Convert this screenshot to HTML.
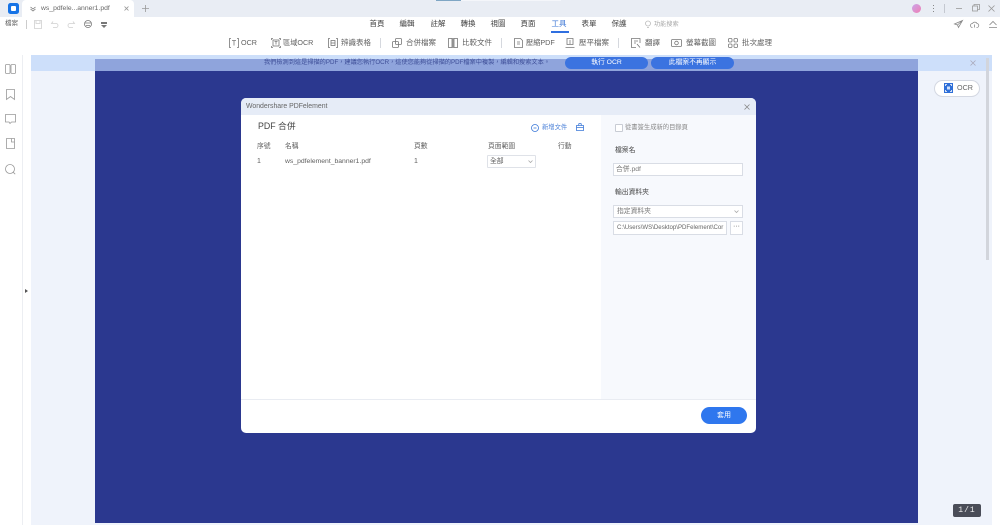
<!DOCTYPE html>
<html lang="zh-Hant"><head><meta charset="utf-8"><title>PDFelement</title>
<style>
html,body{margin:0;padding:0;width:1000px;height:525px;overflow:hidden;background:#fff}
body{font-family:"Liberation Sans","Noto Sans CJK TC",sans-serif;color:#444;position:relative}
.a{position:absolute;white-space:nowrap}
.t{font-size:7.5px;line-height:10px;color:#5f5f5f}
svg.i{position:absolute;fill:none;stroke:#777;stroke-width:.8;overflow:visible}
.c{transform:translateX(-50%)}
</style></head><body>
<!-- title bar -->
<div class="a" style="left:0;top:0;width:1000px;height:17px;background:#e9edf4"></div>
<div class="a" style="left:436px;top:0;width:25px;height:1px;background:#7fa6c4"></div>
<div class="a" style="left:461px;top:0;width:100px;height:1px;background:#f4f6fa"></div>
<div class="a" style="left:8px;top:3px;width:11px;height:11px;border-radius:2.5px;background:#1673e6"></div>
<div class="a" style="left:11px;top:5.5px;width:5px;height:5px;background:#fff;border-radius:1px"></div>
<div class="a" style="left:22px;top:0;width:112px;height:17px;background:#fff;border-radius:4px 4px 0 0"></div>
<svg class="i" style="left:30px;top:6px" width="6" height="6"><path d="M.5 1 3 3 5.500 1M.5 3 3 5 5.500 3"/></svg>
<div class="a" style="left:41px;top:3px;font-size:6.8px;line-height:11px;color:#666">ws_pdfele...anner1.pdf</div>
<svg class="i" style="left:124px;top:6px;stroke:#999" width="5" height="5"><path d="M.5.5l4 4M4.500.5l-4 4"/></svg>
<svg class="i" style="left:142px;top:5px;stroke:#999" width="7" height="7"><path d="M3.500 0v7M0 3.500h7"/></svg>
<div class="a" style="left:912px;top:4px;width:9px;height:9px;border-radius:50%;background:linear-gradient(135deg,#c9a4ea,#f07fb3)"></div>
<div class="a" style="left:933px;top:5px;width:1px;height:1px;background:#888;box-shadow:0 3px #888,0 6px #888"></div>
<div class="a" style="left:944px;top:4px;width:1px;height:9px;background:#c4c8d0"></div>
<svg class="i" style="left:956px;top:8px;stroke:#999" width="7" height="2"><path d="M0 .5h6"/></svg>
<svg class="i" style="left:972px;top:4px;stroke:#999" width="8" height="8"><rect x=".5" y="2" width="5" height="5"/><path d="M2 2V.5h5.500v5H5.500"/></svg>
<svg class="i" style="left:988px;top:5px;stroke:#999" width="7" height="7"><path d="M.5.5l6 6M6.500.5l-6 6"/></svg>
<!-- quick row -->
<div class="a t" style="left:5px;top:19px;font-size:6.5px">檔案</div>
<div class="a" style="left:26px;top:20px;width:1px;height:9px;background:#ccc"></div>
<svg class="i" style="left:34px;top:20px;stroke:#d0d0d0" width="8" height="9"><path d="M.5.500h7v8h-7zM2 .5v3h4v-3"/></svg>
<svg class="i" style="left:51px;top:21px;stroke:#d0d0d0" width="8" height="7"><path d="M2 .5.500 2.500H5a2 2 0 0 1 0 4H2"/></svg>
<svg class="i" style="left:67px;top:21px;stroke:#d0d0d0" width="8" height="7"><path d="M6 .5l1.500 2H3a2 2 0 0 0 0 4h3"/></svg>
<svg class="i" style="left:84px;top:20px;stroke:#777" width="8" height="8"><circle cx="4" cy="4" r="3.500"/><path d="M1 3h6M2 5.500h4"/></svg>
<div class="a" style="left:101px;top:22px;width:6px;height:2px;background:#777"></div>
<div class="a" style="left:101px;top:25px;border:3px solid transparent;border-top:3px solid #777;border-bottom:0"></div>
<!-- menu -->
<div class="a t c" style="left:377px;top:19px;color:#444">首頁</div>
<div class="a t c" style="left:407px;top:19px;color:#444">編輯</div>
<div class="a t c" style="left:438px;top:19px;color:#444">註解</div>
<div class="a t c" style="left:468px;top:19px;color:#444">轉換</div>
<div class="a t c" style="left:498px;top:19px;color:#444">視圖</div>
<div class="a t c" style="left:528px;top:19px;color:#444">頁面</div>
<div class="a t c" style="left:559px;top:19px;color:#3a74d4">工具</div>
<div class="a" style="left:551px;top:31px;width:18px;height:1.500px;background:#2f6fe0"></div>
<div class="a t c" style="left:589px;top:19px;color:#444">表單</div>
<div class="a t c" style="left:619px;top:19px;color:#444">保護</div>
<svg class="i" style="left:644px;top:20px;stroke:#bbb" width="8" height="9"><circle cx="4" cy="3.500" r="2.500"/><path d="M3 7.500h2"/></svg>
<div class="a" style="left:654px;top:20px;font-size:6.200px;line-height:9px;color:#aaa">功能搜索</div>
<svg class="i" style="left:954px;top:20px;stroke:#888" width="9" height="8"><path d="M8.500.5.500 4l3 1 1 2.500L8.500.5zM3.500 5 8.500.5"/></svg>
<svg class="i" style="left:970px;top:21px;stroke:#888" width="9" height="7"><path d="M2.500 6.500a2 2 0 0 1 0-4 2.500 2.500 0 0 1 4.500 0 2 2 0 0 1-.5 4M4.500 6.500V3.500"/></svg>
<svg class="i" style="left:989px;top:21px;stroke:#888" width="8" height="7"><path d="M.5 4 4 .5 7.500 4M0 6.500h8"/></svg>
<!-- toolbar -->
<svg class="i" style="left:229px;top:38px" width="10" height="10"><path d="M2 .5H.5v9H2M8 .5h1.500v9H8M3 2.500h4M5 2.500v5"/></svg>
<div class="a t" style="left:241px;top:38px;font-size:7.200px">OCR</div>
<svg class="i" style="left:271px;top:38px" width="10" height="10"><path d="M2 .5H.5V2M8 .5h1.500V2M2 9.500H.5V8M8 9.500h1.500V8"/><rect x="2" y="2" width="6" height="6"/><path d="M3.500 3.500h3M5 3.500v3"/></svg>
<div class="a t" style="left:283px;top:38px;font-size:7.200px">區域OCR</div>
<svg class="i" style="left:328px;top:38px" width="10" height="10"><path d="M2 .5H.5v9H2M8 .5h1.500v9H8"/><rect x="3" y="2.500" width="4" height="5"/><path d="M3 5h4"/></svg>
<div class="a t" style="left:341px;top:38px">辨識表格</div>
<div class="a" style="left:380px;top:38px;width:1px;height:10px;background:#d5d8de"></div>
<svg class="i" style="left:392px;top:38px" width="10" height="10"><rect x=".5" y="3.500" width="6" height="6" rx="1"/><rect x="3.500" y=".5" width="6" height="6" rx="1"/></svg>
<div class="a t" style="left:406px;top:38px">合併檔案</div>
<svg class="i" style="left:448px;top:38px" width="10" height="10"><rect x=".5" y=".5" width="3.500" height="9"/><rect x="6" y=".5" width="3.500" height="9"/><path d="M5 0v10"/></svg>
<div class="a t" style="left:462px;top:38px">比較文件</div>
<div class="a" style="left:501px;top:38px;width:1px;height:10px;background:#d5d8de"></div>
<svg class="i" style="left:514px;top:38px" width="10" height="10"><path d="M.5.5h6l2 2v7h-8zM3 4h3M3 6h3"/></svg>
<div class="a t" style="left:526px;top:38px;font-size:7.200px">壓縮PDF</div>
<svg class="i" style="left:565px;top:38px" width="10" height="10"><path d="M2 .5h6v6H2zM.5 9.500h9M4 3h2M4 5h2"/></svg>
<div class="a t" style="left:579px;top:38px">壓平檔案</div>
<div class="a" style="left:618px;top:38px;width:1px;height:10px;background:#d5d8de"></div>
<svg class="i" style="left:631px;top:38px" width="10" height="10"><path d="M9 5V.5H.5v9H5M3 3h4M3 5h2M6 6l3 3.500"/></svg>
<div class="a t" style="left:645px;top:38px">翻譯</div>
<svg class="i" style="left:671px;top:38px" width="11" height="10"><rect x=".5" y="1.500" width="10" height="7" rx="1"/><circle cx="5.500" cy="5" r="1.800"/></svg>
<div class="a t" style="left:686px;top:38px">螢幕截圖</div>
<svg class="i" style="left:728px;top:38px" width="10" height="10"><rect x=".5" y=".5" width="3.500" height="3.500" rx="1"/><rect x="6" y=".5" width="3.500" height="3.500" rx="1"/><rect x=".5" y="6" width="3.500" height="3.500" rx="1"/><rect x="6" y="6" width="3.500" height="3.500" rx="1"/></svg>
<div class="a t" style="left:742px;top:38px">批次處理</div>
<!-- content bg -->
<div class="a" style="left:31px;top:55px;width:961px;height:470px;background:#eff3fb"></div>
<div class="a" style="left:22px;top:55px;width:1px;height:470px;background:#eceef2"></div>
<!-- sidebar icons -->
<svg class="i" style="left:5px;top:64px;stroke:#999" width="11" height="10"><rect x=".5" y=".5" width="4.500" height="9" rx="1"/><rect x="6" y=".5" width="4.500" height="9" rx="1"/></svg>
<svg class="i" style="left:6px;top:89px;stroke:#999" width="9" height="11"><path d="M.5.5h8v10L4.500 7.500.5 10.500z"/></svg>
<svg class="i" style="left:5px;top:114px;stroke:#999" width="11" height="10"><path d="M.5.5h10v7.500H6.500L5 9.500 4 8H.5z"/></svg>
<svg class="i" style="left:6px;top:138px;stroke:#999" width="9" height="11"><path d="M.5.5h8v10h-8zM5.500.5v3.500h3"/></svg>
<svg class="i" style="left:5px;top:164px;stroke:#999" width="11" height="11"><circle cx="5" cy="5" r="4.500"/><path d="M8.200 8.200l2 2"/></svg>
<div class="a" style="left:25px;top:289px;border:2px solid transparent;border-left:3px solid #555"></div>
<!-- page -->
<div class="a" style="left:95px;top:59px;width:823px;height:464px;background:#2b388f"></div>
<!-- banner -->
<div class="a" style="left:31px;top:55px;width:961px;height:16px;background:#cddffa"></div>
<div class="a" style="left:95px;top:59px;width:823px;height:12px;background:#8fa4dc"></div>
<div class="a" style="left:264px;top:58px;font-size:6.200px;line-height:10px;color:#3f4f98">我們檢測到這是掃描的PDF，建議您執行OCR，這使您能夠從掃描的PDF檔案中複製，編輯和搜索文本。</div>
<div class="a" style="left:565px;top:57px;width:83px;height:12px;border-radius:6px;background:#3b73e0;color:#fff;font-size:6.800px;line-height:12px;text-align:center">執行 OCR</div>
<div class="a" style="left:651px;top:57px;width:83px;height:12px;border-radius:6px;background:#3b73e0;color:#fff;font-size:6.800px;line-height:12px;text-align:center">此檔案不再顯示</div>
<svg class="i" style="left:970px;top:60px;stroke:#aab" width="6" height="6"><path d="M.5.5l5 5M5.500.5l-5 5"/></svg>
<!-- scrollbar -->
<div class="a" style="left:986px;top:58px;width:3px;height:202px;background:#d2d5dc"></div>
<!-- OCR button -->
<div class="a" style="left:934px;top:80px;width:44px;height:15px;border:1px solid #d4d8e2;border-radius:9px;background:#fff"></div>
<svg class="a" style="left:944px;top:83px" width="9" height="10"><rect width="9" height="10" fill="#2f6fd8"/><path d="M1.500 3V1.500H3M6 1.500h1.500V3M1.500 7v1.500H3M6 8.500h1.500V7" fill="none" stroke="#fff" stroke-width=".8"/><rect x="3" y="3.500" width="3" height="3" fill="#cfe0fb"/></svg>
<div class="a" style="left:957px;top:83px;font-size:7.200px;line-height:10px;color:#666">OCR</div>
<!-- page num -->
<div class="a" style="left:953px;top:504px;width:28px;height:13px;background:#4a4d58;border-radius:2px;color:#eee;font:8px/13px 'Liberation Mono',monospace;letter-spacing:1px;text-align:center">1/1</div>
<!-- dialog -->
<div class="a" style="left:241px;top:98px;width:515px;height:335px;background:#fff;border-radius:5px;overflow:hidden">
  <div class="a" style="left:0;top:0;width:515px;height:17px;background:#e6ecf7"></div>
  <div class="a" style="left:360px;top:17px;width:155px;height:284px;background:#f7f9fd"></div>
  <div class="a" style="left:0;top:301px;width:515px;height:1px;background:#e9ecf2"></div>
</div>
<div class="a" style="left:246px;top:102px;font-size:6.900px;line-height:10px;color:#666">Wondershare PDFelement</div>
<svg class="i" style="left:744px;top:104px;stroke:#888" width="6" height="6"><path d="M.5.5l5 5M5.500.5l-5 5"/></svg>
<div class="a" style="left:258px;top:120px;font-size:8.800px;line-height:13px;color:#444">PDF 合併</div>
<svg class="i" style="left:531px;top:124px;stroke:#3b78d8" width="8" height="8"><circle cx="4" cy="4" r="3.500"/><path d="M2.500 4h3"/></svg>
<div class="a t" style="left:542px;top:123px;font-size:6.300px;color:#4a80d8">新增文件</div>
<svg class="i" style="left:576px;top:123px;stroke:#3b78d8" width="8" height="8"><path d="M.5 2.500h7v5h-7zM2.500 2.500 3 .5h2l.5 2M.5 4.500h7"/></svg>
<div class="a t" style="left:257px;top:142px;font-size:6.800px">序號</div>
<div class="a t" style="left:285px;top:142px;font-size:6.800px">名稱</div>
<div class="a t" style="left:414px;top:142px;font-size:6.800px">頁數</div>
<div class="a t" style="left:488px;top:142px;font-size:6.800px">頁面範圍</div>
<div class="a t" style="left:558px;top:142px;font-size:6.800px">行動</div>
<div class="a t" style="left:257px;top:157px;font-size:7px">1</div>
<div class="a t" style="left:285px;top:157px;font-size:6.800px">ws_pdfelement_banner1.pdf</div>
<div class="a t" style="left:414px;top:157px;font-size:7px">1</div>
<div class="a" style="left:487px;top:155px;width:49px;height:13px;box-sizing:border-box;border:1px solid #dfe2e8;border-radius:1px;background:#fff"></div>
<div class="a t" style="left:490px;top:157px;font-size:6.800px">全部</div>
<svg class="i" style="left:528px;top:160px;stroke:#aaa" width="5" height="3"><path d="M.5.5 2.500 2.500 4.500.5"/></svg>
<div class="a" style="left:615px;top:124px;width:6px;height:6px;border:1px solid #c8ccd4;border-radius:1px;background:#fff"></div>
<div class="a t" style="left:625px;top:123px;font-size:6.300px;color:#888">從書簽生成新的目錄頁</div>
<div class="a t" style="left:615px;top:146px;font-size:6.800px;color:#444">檔案名</div>
<div class="a" style="left:613px;top:163px;width:130px;height:13px;box-sizing:border-box;border:1px solid #d9dde5;background:#fff"></div>
<div class="a t" style="left:616px;top:165px;font-size:6.800px;color:#777">合併.pdf</div>
<div class="a t" style="left:615px;top:188px;font-size:6.800px;color:#444">輸出資料夾</div>
<div class="a" style="left:613px;top:205px;width:130px;height:13px;box-sizing:border-box;border:1px solid #d9dde5;background:#fff"></div>
<div class="a t" style="left:617px;top:207px;font-size:6.800px;color:#777">指定資料夾</div>
<svg class="i" style="left:734px;top:210px;stroke:#aaa" width="5" height="3"><path d="M.5.5 2.500 2.500 4.500.5"/></svg>
<div class="a" style="left:613px;top:221px;width:114px;height:14px;box-sizing:border-box;border:1px solid #d9dde5;background:#fff;overflow:hidden;font-size:6.100px;line-height:12px;color:#666;padding-left:3px">C:\Users\WS\Desktop\PDFelement\Cor</div>
<div class="a" style="left:730px;top:221px;width:13px;height:14px;box-sizing:border-box;border:1px solid #d9dde5;background:#fff;font-size:7px;line-height:10px;text-align:center;color:#555">···</div>
<div class="a" style="left:701px;top:407px;width:46px;height:17px;border-radius:9px;background:#2f77ee;color:#fff;font-size:7px;line-height:17px;text-align:center">套用</div>
</body></html>
